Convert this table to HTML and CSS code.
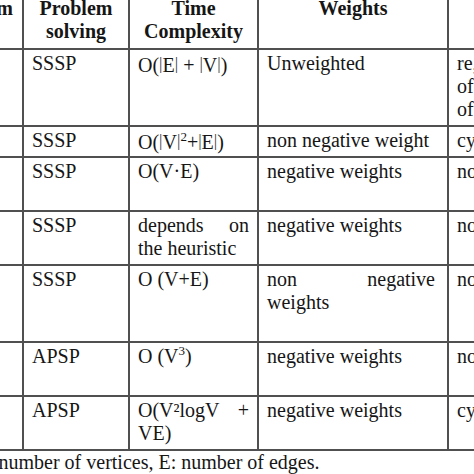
FILE: index.html
```html
<!DOCTYPE html>
<html lang="en">
  <head>
    <meta charset="UTF-8" />
    <meta name="viewport" content="width=device-width, initial-scale=1.0" />
    <title>Shortest Path Algorithms</title>
    <link rel="stylesheet" href="styles.css">
  </head>
  <body>
    <div class="figure">
      <table class="algos">
        <colgroup>
          <col class="c-name" />
          <col class="c-problem" />
          <col class="c-time" />
          <col class="c-weights" />
          <col class="c-cycles" />
        </colgroup>
        <thead>
          <tr class="r-head">
            <th>Algorithm</th>
            <th>Problem solving</th>
            <th>Time Complexity</th>
            <th>Weights</th>
            <th>Negative cycles</th>
          </tr>
        </thead>
        <tbody>
          <tr class="r-tall">
            <td>BFS</td>
            <td>SSSP</td>
            <td>O(<span class="bar">|</span>E<span class="bar">|</span> + <span class="bar">|</span>V<span class="bar">|</span>)</td>
            <td>Unweighted</td>
            <td class="edge">re,<br />of<br />of</td>
          </tr>
          <tr class="r-short">
            <td>Dijkstra</td>
            <td>SSSP</td>
            <td>O(<span class="bar">|</span>V<span class="bar">|</span><sup>2</sup>+<span class="bar">|</span>E<span class="bar">|</span>)</td>
            <td>non negative weight</td>
            <td class="edge">cycles</td>
          </tr>
          <tr class="r-mid">
            <td>Bellman-Ford</td>
            <td>SSSP</td>
            <td>O(V·E)</td>
            <td>negative weights</td>
            <td class="edge">no</td>
          </tr>
          <tr class="r-mid">
            <td>A*</td>
            <td>SSSP</td>
            <td>depends on the heuristic</td>
            <td>negative weights</td>
            <td class="edge">no</td>
          </tr>
          <tr class="r-tall">
            <td>DAG</td>
            <td>SSSP</td>
            <td>O (V+E)</td>
            <td>non negative weights</td>
            <td class="edge">no</td>
          </tr>
          <tr class="r-mid">
            <td>Floyd</td>
            <td>APSP</td>
            <td>O (V<sup>3</sup>)</td>
            <td>negative weights</td>
            <td class="edge">no</td>
          </tr>
          <tr class="r-mid">
            <td>Johnson</td>
            <td>APSP</td>
            <td>O(V²logV + VE)</td>
            <td>negative weights</td>
            <td class="edge">cycles</td>
          </tr>
        </tbody>
      </table>
      <p class="note">V: number of vertices, E: number of edges.</p>
    </div>
  </body>
</html>
```

FILE: styles.css
```css
body {
  margin: 0;
  padding: 0;
  background-color: #ffffff;
  font-family: "Liberation Serif", "Times New Roman", serif;
  color: #161616;
  overflow: hidden;
}

.figure {
  width: 800px;
  margin-left: -87px;
  margin-top: -7px;
}

.algos {
  border-collapse: collapse;
  table-layout: fixed;
  width: 754px;
  font-size: 20px;
  line-height: 23px;
}

.c-name {
  width: 109px;
}
.c-problem {
  width: 106px;
}
.c-time {
  width: 129px;
}
.c-weights {
  width: 190px;
}
.c-cycles {
  width: 220px;
}

.algos th,
.algos td {
  border: 2px solid #505050;
  vertical-align: top;
  padding: 2px 8px 0 8px;
}

.algos th {
  font-weight: bold;
  text-align: center;
}

.algos td {
  text-align: justify;
}

.algos td:nth-child(4) {
  padding-right: 12px;
}

.algos td.edge {
  white-space: nowrap;
}

.algos sup {
  font-size: 13px;
  line-height: 0;
}

.bar {
  font-size: 17px;
  vertical-align: 3px;
  color: #3a3a3a;
}

.r-head {
  height: 55px;
}
.r-tall {
  height: 77px;
}
.r-short {
  height: 31px;
}
.r-mid {
  height: 54px;
}

.note {
  margin: 0;
  font-size: 20px;
  line-height: 23px;
  margin-left: -25px;
  padding-left: 87px;
}
```
